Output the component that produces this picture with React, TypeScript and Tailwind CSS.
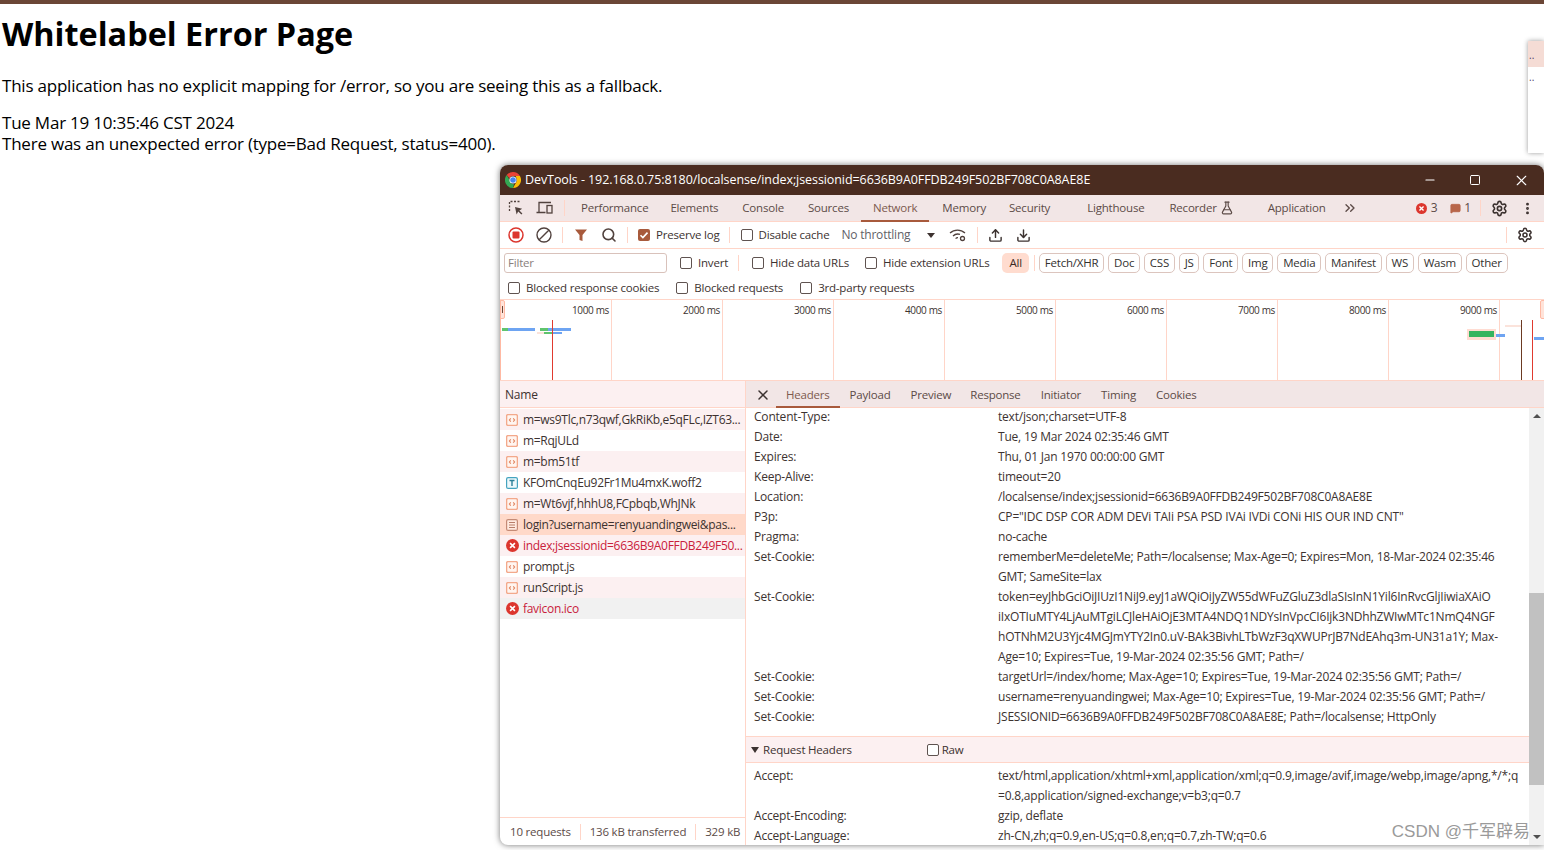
import { Settings, MoreVertical, ChevronsRight, FlaskConical, Search, Upload, Download, X, Minus, Square, MessageSquare } from "lucide-react";

const tabs = [
  ["Performance", "ml-[16px]"],
  ["Elements", "ml-[22px]"],
  ["Console", "ml-[24px]"],
  ["Sources", "ml-[24px]"],
  ["Network", "ml-[24px]"],
  ["Memory", "ml-[25px]"],
  ["Security", "ml-[23px]"],
  ["Lighthouse", "ml-[37px]"],
];

const chips = ["Fetch/XHR", "Doc", "CSS", "JS", "Font", "Img", "Media", "Manifest", "WS", "Wasm", "Other"];
const marks = ["1000", "2000", "3000", "4000", "5000", "6000", "7000", "8000", "9000"];

const requests = [
  { name: "m=ws9Tlc,n73qwf,GkRiKb,e5qFLc,IZT63...", kind: "script", bg: "bg-[#fcf0f1]" },
  { name: "m=RqjULd", kind: "script", bg: "bg-white" },
  { name: "m=bm51tf", kind: "script", bg: "bg-[#fcf0f1]" },
  { name: "KFOmCnqEu92Fr1Mu4mxK.woff2", kind: "font", bg: "bg-white" },
  { name: "m=Wt6vjf,hhhU8,FCpbqb,WhJNk", kind: "script", bg: "bg-[#fcf0f1]" },
  { name: "login?username=renyuandingwei&pas...", kind: "doc", bg: "bg-[#ffd9c9]" },
  { name: "index;jsessionid=6636B9A0FFDB249F50...", kind: "error", bg: "bg-[#fcf0f1]" },
  { name: "prompt.js", kind: "script", bg: "bg-white" },
  { name: "runScript.js", kind: "script", bg: "bg-[#fcf0f1]" },
  { name: "favicon.ico", kind: "error", bg: "bg-[#f1f1f1]" },
];

const responseHeaders: [string, string[]][] = [
  ["Content-Type:", ["text/json;charset=UTF-8"]],
  ["Date:", ["Tue, 19 Mar 2024 02:35:46 GMT"]],
  ["Expires:", ["Thu, 01 Jan 1970 00:00:00 GMT"]],
  ["Keep-Alive:", ["timeout=20"]],
  ["Location:", ["/localsense/index;jsessionid=6636B9A0FFDB249F502BF708C0A8AE8E"]],
  ["P3p:", ['CP="IDC DSP COR ADM DEVi TAIi PSA PSD IVAi IVDi CONi HIS OUR IND CNT"']],
  ["Pragma:", ["no-cache"]],
  ["Set-Cookie:", ["rememberMe=deleteMe; Path=/localsense; Max-Age=0; Expires=Mon, 18-Mar-2024 02:35:46", "GMT; SameSite=lax"]],
  ["Set-Cookie:", [
    "token=eyJhbGciOiJIUzI1NiJ9.eyJ1aWQiOiJyZW55dWFuZGluZ3dlaSIsInN1Yil6InRvcGljIiwiaXAiO",
    "iIxOTIuMTY4LjAuMTgiLCJleHAiOjE3MTA4NDQ1NDYsInVpcCI6Ijk3NDhhZWIwMTc1NmQ4NGF",
    "hOTNhM2U3Yjc4MGJmYTY2In0.uV-BAk3BivhLTbWzF3qXWUPrJB7NdEAhq3m-UN31a1Y; Max-",
    "Age=10; Expires=Tue, 19-Mar-2024 02:35:56 GMT; Path=/",
  ]],
  ["Set-Cookie:", ["targetUrl=/index/home; Max-Age=10; Expires=Tue, 19-Mar-2024 02:35:56 GMT; Path=/"]],
  ["Set-Cookie:", ["username=renyuandingwei; Max-Age=10; Expires=Tue, 19-Mar-2024 02:35:56 GMT; Path=/"]],
  ["Set-Cookie:", ["JSESSIONID=6636B9A0FFDB249F502BF708C0A8AE8E; Path=/localsense; HttpOnly"]],
];

const requestHeaders: [string, string[]][] = [
  ["Accept:", ["text/html,application/xhtml+xml,application/xml;q=0.9,image/avif,image/webp,image/apng,*/*;q", "=0.8,application/signed-exchange;v=b3;q=0.7"]],
  ["Accept-Encoding:", ["gzip, deflate"]],
  ["Accept-Language:", ["zh-CN,zh;q=0.9,en-US;q=0.8,en;q=0.7,zh-TW;q=0.6"]],
];

function Check({ on, label, className = "" }: { on?: boolean; label: string; className?: string }) {
  return (
    <label className={`flex items-center gap-[6px] whitespace-nowrap ${className}`}>
      {on ? (
        <span className="flex h-[12px] w-[12px] items-center justify-center rounded-[2px] bg-[#a85a3c]">
          <svg viewBox="0 0 12 12" className="h-[12px] w-[12px]" fill="none" stroke="white" strokeWidth="1.6">
            <path d="M2.5 6.2l2.4 2.4 4.6-5" />
          </svg>
        </span>
      ) : (
        <span className="h-[12px] w-[12px] rounded-[2px] border border-[#5f5350] bg-white" />
      )}
      <span>{label}</span>
    </label>
  );
}

function Sep({ className = "" }: { className?: string }) {
  return <span className={`h-[16px] w-px shrink-0 bg-[#ffd5c8] ${className}`} />;
}

function ChromeLogo() {
  return (
    <svg viewBox="0 0 16 16" className="h-[16px] w-[16px] shrink-0">
      <path d="M8 0a8 8 0 0 1 6.93 4H8a4 4 0 0 0-3.6 2.3L1.7 3A8 8 0 0 1 8 0z" fill="#ea4335" />
      <path d="M14.93 4A8 8 0 0 1 8 16l3.4-6A4 4 0 0 0 11.2 5.6L10.6 4z" fill="#fbbc04" />
      <path d="M8 16A8 8 0 0 1 1.7 3l3 5.3A4 4 0 0 0 9 11.9z" fill="#34a853" />
      <circle cx="8" cy="8" r="3.6" fill="#fff" />
      <circle cx="8" cy="8" r="2.8" fill="#4285f4" />
    </svg>
  );
}

function ErrorDot({ size = 13 }: { size?: number }) {
  return (
    <svg viewBox="0 0 14 14" width={size} height={size} className="shrink-0">
      <circle cx="7" cy="7" r="7" fill="#dc362e" />
      <path d="M4.4 4.4l5.2 5.2M9.6 4.4l-5.2 5.2" stroke="white" strokeWidth="1.7" />
    </svg>
  );
}

function FileIcon({ kind }: { kind: string }) {
  if (kind === "error")
    return (
      <span className="-mr-px shrink-0">
        <ErrorDot />
      </span>
    );
  if (kind === "font")
    return (
      <svg viewBox="0 0 12 12" className="h-[12px] w-[12px] shrink-0" fill="none">
        <rect x="0.6" y="0.6" width="10.8" height="10.8" rx="1.5" stroke="#45a3bf" strokeWidth="1.2" fill="#eef8fb" />
        <path d="M3.5 3.5h5M6 3.5v5.5" stroke="#2c7f99" strokeWidth="1.4" />
      </svg>
    );
  if (kind === "doc")
    return (
      <svg viewBox="0 0 12 12" className="h-[12px] w-[12px] shrink-0" fill="none">
        <rect x="0.6" y="0.6" width="10.8" height="10.8" rx="1.5" stroke="#c58b76" strokeWidth="1.2" fill="#ffe9df" />
        <path d="M3 3.5h6M3 6h6M3 8.5h6" stroke="#b87e69" />
      </svg>
    );
  return (
    <svg viewBox="0 0 12 12" className="h-[12px] w-[12px] shrink-0" fill="none">
      <rect x="0.6" y="0.6" width="10.8" height="10.8" rx="1.5" stroke="#f3a98b" strokeWidth="1.4" fill="#fff5f0" />
      <path d="M4.8 4.4L3.4 6l1.4 1.6M7.2 4.4L8.6 6 7.2 7.6" stroke="#e0835f" strokeWidth="1.1" />
    </svg>
  );
}

function HeaderRows({ rows }: { rows: [string, string[]][] }) {
  return (
    <>
      {rows.map(([name, lines], i) => (
        <div key={i} className="flex pl-[8px]">
          <div className="w-[244px] shrink-0 leading-[20px]">{name}</div>
          <div>
            {lines.map((l, j) => (
              <div key={j} className="h-[20px] whitespace-nowrap leading-[20px]">{l}</div>
            ))}
          </div>
        </div>
      ))}
    </>
  );
}

function Overview() {
  return (
    <div className="relative h-[81px] shrink-0 overflow-hidden border-b border-[#ffd5c8]">
      <div className="flex h-full">
        <div className="w-[1px] bg-[#ffb9a3]" />
        {marks.map((m) => (
          <div key={m} className="h-full w-[111px] shrink-0 border-r border-[#ffd5c8] pt-[4px] pr-[2px] text-right text-[10px] leading-[13px] tracking-[-0.35px]">
            {m} ms
          </div>
        ))}
      </div>
      {/* timeline bars */}
      <svg className="absolute inset-0 h-[80px] w-[1044px]" viewBox="0 0 1044 80">
        <rect x="2" y="28" width="6" height="3" fill="#5fc46e" />
        <rect x="8" y="28" width="27" height="3" fill="#6ea4f2" />
        <rect x="40" y="28" width="8" height="3" fill="#5fc46e" />
        <rect x="48" y="28" width="23" height="3" fill="#6ea4f2" />
        <rect x="37" y="32" width="8" height="2" fill="#fbe3db" />
        <rect x="44" y="32" width="8" height="2" fill="#5fc46e" />
        <rect x="52" y="32" width="10" height="2" fill="#6ea4f2" />
        <rect x="52" y="20" width="1" height="60" fill="#e03a2f" />
        <rect x="967" y="29" width="29" height="11" fill="#ffdcd2" />
        <rect x="969" y="31" width="25" height="6" fill="#35b45f" />
        <rect x="996" y="34" width="9" height="3" fill="#6ea4f2" />
        <rect x="1005" y="25" width="16" height="2" fill="#fbe3db" />
        <rect x="1021" y="20" width="1" height="60" fill="#6b3a22" />
        <rect x="1032" y="20" width="1" height="60" fill="#e03a2f" />
        <rect x="1034" y="37" width="10" height="3" fill="#6ea4f2" />
      </svg>
      <span className="absolute top-0 left-0 flex h-[19px] w-[5px] items-center justify-center rounded-r-[2px] border border-[#ffb9a3] bg-[#ffe3d9]">
        <span className="h-[7px] w-px bg-[#6b4636]" />
      </span>
      <span className="absolute top-0 right-[-1px] h-[19px] w-[5px] rounded-l-[2px] border border-[#ffb9a3] bg-[#ffe3d9]" />
    </div>
  );
}

function DevTools() {
  return (
    <div className="absolute top-[165px] left-[500px] flex h-[680px] w-[1044px] flex-col overflow-hidden rounded-t-[8px] rounded-bl-[8px] bg-white text-[12px] tracking-[-0.2px] text-[#3c3230] shadow-[0_0_6px_rgba(0,0,0,0.55)]">
      <div className="flex h-[30px] shrink-0 items-center bg-[#4a2c20] pl-[5px] text-[12.5px] tracking-[-0.08px] text-white">
        <ChromeLogo />
        <span className="ml-[4px] whitespace-nowrap">DevTools - 192.168.0.75:8180/localsense/index;jsessionid=6636B9A0FFDB249F502BF708C0A8AE8E</span>
        <div className="ml-auto flex items-center gap-[32px] pr-[14px]">
          <Minus size={14} strokeWidth={1.8} />
          <Square size={12} strokeWidth={2} />
          <X size={17} strokeWidth={1.6} />
        </div>
      </div>

      <div className="flex h-[27px] shrink-0 items-center border-b border-[#ffd5c8] bg-[#f2e6e6] pl-[8px] text-[11.5px] text-[#5c4b47]">
        <svg viewBox="0 0 16 16" className="h-[16px] w-[16px] shrink-0" fill="none" stroke="#51423e">
          <path d="M1.5 11V1.5H13" strokeDasharray="2 1.5" strokeWidth="1.3" />
          <path d="M7 7l1.6 7.6 1.6-3 3.2 3 1-1-3-3 2.8-1.8z" fill="#51423e" stroke="none" />
        </svg>
        <svg viewBox="0 0 18 16" className="ml-[12px] h-[16px] w-[18px] shrink-0" fill="none" stroke="#51423e" strokeWidth="1.3">
          <path d="M3 12V2.5h12M0.5 12.5h9" />
          <rect x="11" y="5.5" width="5" height="7.5" />
        </svg>
        <Sep className="ml-[10px]" />
        {tabs.map(([t, m]) => (
          <div key={t} className={`relative flex h-full items-center whitespace-nowrap ${m} ${t === "Network" ? "text-[#7d5a4e]" : ""}`}>
            {t}
            {t === "Network" && <span className="absolute right-[-12px] bottom-[-1px] left-[-12px] h-[2px] bg-[#a85a3c]" />}
          </div>
        ))}
        <span className="ml-[25px] flex items-center gap-[3px] whitespace-nowrap">
          Recorder <FlaskConical size={14} strokeWidth={2} />
        </span>
        <span className="ml-[34px]">Application</span>
        <ChevronsRight size={16} strokeWidth={2} className="ml-[16px]" />
        <div className="ml-auto flex items-center text-[12px]">
          <ErrorDot size={11} />
          <span className="ml-[4px]">3</span>
          <MessageSquare size={11} className="ml-[13px] fill-[#b8664a] text-[#b8664a]" />
          <span className="ml-[3px]">1</span>
          <Sep className="ml-[9px]" />
          <Settings size={17} className="ml-[9.5px] text-[#3c3230]" strokeWidth={2.3} />
          <MoreVertical size={15} className="mr-[9.5px] ml-[12px] text-[#3c3230]" strokeWidth={2.6} />
        </div>
      </div>

      <div className="flex h-[27px] shrink-0 items-center border-b border-[#ffd5c8] pl-[8px] text-[11.5px]">
        <svg viewBox="0 0 16 16" className="h-[16px] w-[16px] shrink-0">
          <circle cx="8" cy="8" r="7" fill="none" stroke="#dc362e" strokeWidth="1.5" />
          <rect x="4.5" y="4.5" width="7" height="7" rx="1" fill="#dc362e" />
        </svg>
        <svg viewBox="0 0 16 16" className="ml-[12px] h-[16px] w-[16px] shrink-0" fill="none" stroke="#51423e" strokeWidth="1.4">
          <circle cx="8" cy="8" r="7" />
          <path d="M3.2 12.8L12.8 3.2" />
        </svg>
        <Sep className="ml-[10px]" />
        <svg viewBox="0 0 14 14" className="ml-[11px] h-[14px] w-[14px] shrink-0">
          <path d="M1 1.5h12L8.5 7v6l-3-1V7z" fill="#a85a3c" />
        </svg>
        <Search size={16} strokeWidth={2.4} className="ml-[13px] text-[#51423e]" />
        <Sep className="ml-[10px]" />
        <Check on label="Preserve log" className="ml-[10px]" />
        <Sep className="ml-[9px]" />
        <Check label="Disable cache" className="ml-[11px]" />
        <span className="ml-[12px] whitespace-nowrap text-[12px] text-[#5f5f67]">No throttling</span>
        <span className="ml-[17px] h-0 w-0 border-x-[4px] border-t-[5px] border-x-transparent border-t-[#3c3230]" />
        <svg viewBox="0 0 18 14" className="ml-[14px] h-[14px] w-[18px] shrink-0" fill="none" stroke="#51423e" strokeWidth="1.3">
          <path d="M1 5a11 11 0 0 1 15 0M4 8a7 7 0 0 1 7-1.6M6.6 10.6a3 3 0 0 1 2.4-1" />
          <circle cx="13.5" cy="10.5" r="2" />
        </svg>
        <Sep className="ml-[10px]" />
        <Upload size={15} strokeWidth={2.3} className="ml-[10px] text-[#3c3230]" />
        <Download size={15} strokeWidth={2.3} className="ml-[13px] text-[#3c3230]" />
        <div className="ml-auto flex items-center">
          <Sep />
          <Settings size={16} strokeWidth={2.3} className="mr-[11px] ml-[10px] text-[#3c3230]" />
        </div>
      </div>

      <div className="flex h-[28px] shrink-0 items-center pl-[4px] text-[11.5px]">
        <div className="flex h-[20px] w-[163px] shrink-0 items-center rounded-[3px] border border-[#d9c2bb] pl-[3px] text-[#8a7f7c]">Filter</div>
        <Check label="Invert" className="ml-[13px]" />
        <Sep className="ml-[10px]" />
        <Check label="Hide data URLs" className="ml-[13px]" />
        <Check label="Hide extension URLs" className="ml-[16px]" />
        <span className="ml-[13px] flex h-[20px] items-center rounded-[5px] bg-[#ffdccf] px-[7px] text-[#3c2a25]">All</span>
        <Sep className="ml-[5px]" />
        <div className="ml-[4px] flex items-center gap-[4px]">
          {chips.map((c) => (
            <span key={c} className="flex h-[20px] items-center rounded-[5px] border border-[#dcc5be] px-[4.8px] whitespace-nowrap text-[#33312f]">
              {c}
            </span>
          ))}
        </div>
      </div>

      <div className="flex h-[23px] shrink-0 items-center border-b border-[#ffd5c8] pl-[8px] text-[11.5px]">
        <Check label="Blocked response cookies" />
        <Check label="Blocked requests" className="ml-[17px]" />
        <Check label="3rd-party requests" className="ml-[17px]" />
      </div>

      <Overview />

      <div className="flex min-h-0 flex-1">
        <div className="flex w-[246px] shrink-0 flex-col border-r border-[#ffd5c8]">
          <div className="flex h-[27px] shrink-0 items-center border-b border-[#ffd5c8] bg-[#fcf0f1] pt-px pl-[5px]">Name</div>
          <div className="min-h-0 flex-1 pt-px">
            {requests.map((r) => (
              <div key={r.name} className={`flex h-[21px] items-center gap-[5px] overflow-hidden pl-[6px] tracking-[-0.3px] whitespace-nowrap ${r.bg} ${r.kind === "error" ? "text-[#c9213b]" : ""}`}>
                <FileIcon kind={r.kind} />
                {r.name}
              </div>
            ))}
          </div>
          <div className="flex h-[28px] shrink-0 items-center border-t border-[#ffd5c8] pl-[10px] text-[11.5px] whitespace-nowrap text-[#5c4b47]">
            10 requests
            <Sep className="mx-[9px]" />
            136 kB transferred
            <Sep className="mx-[9px]" />
            329 kB
          </div>
        </div>

        <div className="flex min-w-0 flex-1 flex-col">
          <div className="flex h-[27px] shrink-0 items-center border-b border-[#ffd5c8] bg-[#f2e6e6] pt-px text-[11.5px] text-[#5c4b47]">
            <X size={16} strokeWidth={2.2} className="ml-[9px] text-[#3c3230]" />
            <div className="relative ml-[15px] flex h-full items-center text-[#7d5a4e]">
              Headers
              <span className="absolute right-[-10px] bottom-[-1px] left-[-10px] h-[2px] bg-[#a85a3c]" />
            </div>
            <span className="ml-[20px]">Payload</span>
            <span className="ml-[20px]">Preview</span>
            <span className="ml-[19px]">Response</span>
            <span className="ml-[20px]">Initiator</span>
            <span className="ml-[20px]">Timing</span>
            <span className="ml-[20px]">Cookies</span>
          </div>
          <div className="relative min-h-0 flex-1 overflow-hidden pr-[15px]">
            <div className="-mt-px pb-[9px]">
              <HeaderRows rows={responseHeaders} />
            </div>
            <div className="flex h-[27px] items-center border-y border-[#ffd5c8] bg-[#fcf0f1] pl-[5px] text-[11.5px]">
              <span className="h-0 w-0 border-x-[4px] border-t-[6px] border-x-transparent border-t-[#3c3230]" />
              <span className="ml-[4px]">Request Headers</span>
              <Check label="Raw" className="ml-[75px] !gap-[3px]" />
            </div>
            <div className="pt-[3px]">
              <HeaderRows rows={requestHeaders} />
            </div>
            {/* scrollbar */}
            <div className="absolute top-0 right-0 bottom-0 flex w-[15px] flex-col items-center bg-[#f1f1f1]">
              <span className="mt-[6px] h-0 w-0 border-x-[4px] border-b-[4px] border-x-transparent border-b-[#505050]" />
              <span className="mt-[175px] h-[192px] w-full bg-[#c1c1c1]" />
              <span className="mt-auto mb-[6px] h-0 w-0 border-x-[4px] border-t-[4px] border-x-transparent border-t-[#505050]" />
            </div>
            <span className="absolute right-[14px] bottom-[1px] font-['Liberation_Sans','Noto_Sans_CJK_SC',sans-serif] text-[17px] leading-[24px] tracking-normal whitespace-nowrap text-[#9a9a9a]">
              CSDN @千军辟易
            </span>
          </div>
        </div>
      </div>
    </div>
  );
}

export default function App() {
  return (
    <div className="relative h-[850px] w-[1544px] overflow-hidden bg-white font-['Open_Sans',sans-serif] text-black">
      <div className="h-[4px] bg-[#6b4636]" />
      <div className="pl-[2px] text-[17px] tracking-[-0.22px]">
        <h1 className="mt-[9px] text-[32.4px] leading-[40px] font-bold tracking-normal">Whitelabel Error Page</h1>
        <p className="mt-[21px] leading-[24px]">This application has no explicit mapping for /error, so you are seeing this as a fallback.</p>
        <p className="mt-[14px] leading-[21px]">Tue Mar 19 10:35:46 CST 2024</p>
        <p className="leading-[21px]">There was an unexpected error (type=Bad Request, status=400).</p>
      </div>

      <div className="absolute top-[41px] right-0 h-[112px] w-[16px] bg-white text-[10px] leading-[21px] text-[#4b3b66] shadow-[0_0_5px_rgba(0,0,0,0.4)]">
        <div className="h-[26px] bg-[#f5dcd5] pt-[4px] pl-[1px]">..</div>
        <div className="pl-[1px]">..</div>
      </div>

      <DevTools />
    </div>
  );
}
